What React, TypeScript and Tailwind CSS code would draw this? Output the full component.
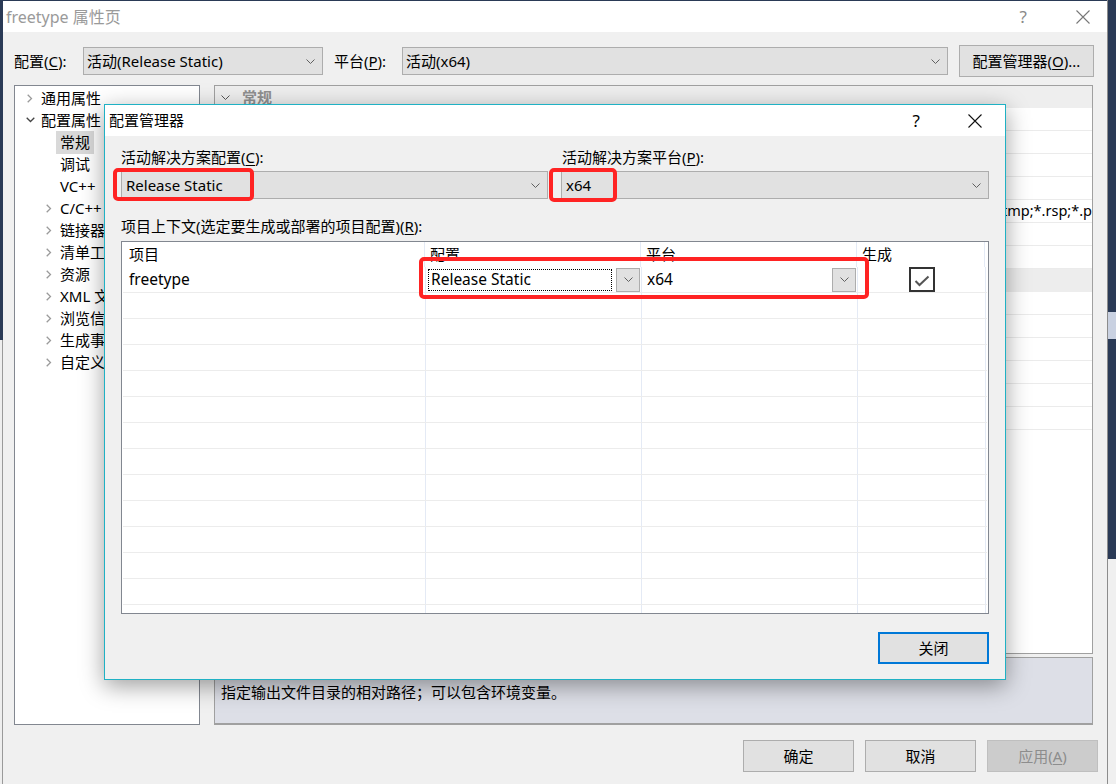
import React from "react";

const FONT = "font-['Noto_Sans','Noto_Sans_CJK_SC',sans-serif]";

function Chevron({ className = "" }: { className?: string }) {
  return (
    <svg width="9" height="5" viewBox="0 0 9 5" className={className}>
      <path d="M0.5 0.5L4.5 4.5L8.5 0.5" fill="none" stroke="currentColor" strokeWidth="1" />
    </svg>
  );
}

function TreeArrow({ open }: { open?: boolean }) {
  if (open)
    return (
      <svg width="9" height="6" viewBox="0 0 9 6">
        <path d="M0.7 0.7L4.5 4.5L8.3 0.7" fill="none" stroke="#444" strokeWidth="1.3" />
      </svg>
    );
  return (
    <svg width="6" height="9" viewBox="0 0 6 9">
      <path d="M0.7 0.7L4.5 4.5L0.7 8.3" fill="none" stroke="#9a9a9a" strokeWidth="1.3" />
    </svg>
  );
}

function CloseX({ color }: { color: string }) {
  return (
    <svg width="14" height="14" viewBox="0 0 14 14">
      <path d="M0.5 0.5L13.5 13.5M13.5 0.5L0.5 13.5" stroke={color} strokeWidth="1.1" fill="none" />
    </svg>
  );
}

function Combo({ text, className }: { text: string; className: string }) {
  return (
    <div className={`flex h-[28px] items-center justify-between border border-[#adadad] bg-[#e1e1e1] pl-[3px] pr-[7px] text-[15px] text-black ${className}`}>
      <span>{text}</span>
      <Chevron className="text-[#606060]" />
    </div>
  );
}

const tree: { label: string; level: number; arrow?: "open" | "closed"; selected?: boolean }[] = [
  { label: "通用属性", level: 1, arrow: "closed" },
  { label: "配置属性", level: 1, arrow: "open" },
  { label: "常规", level: 2, selected: true },
  { label: "调试", level: 2 },
  { label: "VC++\u00a0\u00a0目录", level: 2 },
  { label: "C/C++", level: 2, arrow: "closed" },
  { label: "链接器", level: 2, arrow: "closed" },
  { label: "清单工具", level: 2, arrow: "closed" },
  { label: "资源", level: 2, arrow: "closed" },
  { label: "XML 文档生成器", level: 2, arrow: "closed" },
  { label: "浏览信息", level: 2, arrow: "closed" },
  { label: "生成事件", level: 2, arrow: "closed" },
  { label: "自定义生成步骤", level: 2, arrow: "closed" },
];

const general: [string, string, boolean?][] = [
  ["输出目录", "$(SolutionDir)$(Platform)\\$(Configuration)\\"],
  ["中间目录", "$(Platform)\\$(Configuration)\\"],
  ["目标文件名", "$(ProjectName)"],
  ["目标文件扩展名", ".lib"],
  ["清除时要删除的扩展名", "*.cdf;*.cache;*.obj;*.obj.enc;*.ilk;*.ipdb;*.iobj;*.resources;*.tlb;*.tli;*.tlh;*.tmp;*.rsp;*.p", true],
  ["生成日志文件", "$(IntDir)$(MSBuildProjectName).log"],
  ["平台工具集", "Visual Studio 2017 (v141)"],
];

const defaults: [string, string][] = [
  ["配置类型", "静态库(.lib)"],
  ["Windows SDK 版本", "10.0.17763.0"],
  ["字符集", "使用 Unicode 字符集"],
  ["公共语言运行时支持", "无公共语言运行时支持"],
  [".NET 目标框架版本", ""],
  ["全程序优化", "无全程序优化"],
];

function PropRow({ name, value, right }: { name: string; value: string; right?: boolean }) {
  return (
    <div className="flex h-[23px] shrink-0 border-b border-[#ebebeb] text-[15px]">
      <div className="flex w-[340px] items-center border-r border-[#ebebeb] pl-[22px]">{name}</div>
      <div className={`flex min-w-0 flex-1 items-center overflow-hidden whitespace-nowrap px-[4px] ${right ? "justify-end pr-0 text-[14.5px]" : ""}`}>
        {value}
      </div>
    </div>
  );
}

function OuterDialog() {
  return (
    <div className="mt-[1px] flex h-[783px] w-[1104px] shrink-0 flex-col bg-[#f0f0f0]">
      {/* title bar */}
      <div className="flex h-[31px] shrink-0 items-center bg-white pl-[3px] text-[16px] text-[#9a9a9a]">
        <span>freetype 属性页</span>
        <span className="ml-auto mr-[49px] text-[17px] text-[#8a8a8a]">?</span>
        <span className="mr-[17px]">
          <CloseX color="#777" />
        </span>
      </div>

      {/* configuration row */}
      <div className="mt-[13px] flex h-[32px] shrink-0 items-center pl-[11px] text-[15px] text-black">
        <span className="w-[69px]">
          配置(<span className="underline underline-offset-2">C</span>):
        </span>
        <Combo text="活动(Release Static)" className="w-[240px]" />
        <span className="ml-[11px] w-[68px]">
          平台(<span className="underline underline-offset-2">P</span>):
        </span>
        <Combo text="活动(x64)" className="w-[546px]" />
        <div className="ml-[11px] flex h-[32px] w-[135px] items-center justify-center border border-[#adadad] bg-[#e1e1e1]">
          配置管理器(<span className="underline underline-offset-2">O</span>)...
        </div>
      </div>

      {/* main area */}
      <div className="mt-[8px] flex h-[640px] shrink-0 pl-[11px] text-[15px] text-black">
        <div className="flex w-[186px] flex-col border border-[#828790] bg-white pt-[1px]">
          {tree.map((t) => (
            <div key={t.label} className="flex h-[22px] shrink-0 items-center whitespace-nowrap">
              <div className={`flex w-[12px] justify-center ${t.level === 1 ? "ml-[9px]" : "ml-[28px]"}`}>
                {t.arrow ? <TreeArrow open={t.arrow === "open"} /> : null}
              </div>
              <span className={`ml-[1px] px-[4px] leading-[23px] ${t.selected ? "bg-[#d9d9d9]" : ""}`}>{t.label}</span>
            </div>
          ))}
        </div>

        <div className="ml-[14px] flex w-[879px] flex-col">
          <div className="flex h-[569px] flex-col overflow-hidden border border-[#a0a0a0] bg-white">
            <div className="flex h-[22px] shrink-0 items-center bg-[#eeeeee] pl-[6px] text-[#909090]">
              <Chevron className="text-[#555]" />
              <span className="ml-[12px] font-bold">常规</span>
            </div>
            {general.map(([n, v, r]) => (
              <PropRow key={n} name={n} value={v} right={r} />
            ))}
            <div className="flex h-[23px] shrink-0 items-center bg-[#ededed] pl-[6px] text-[#909090]">
              <Chevron className="text-[#555]" />
              <span className="ml-[12px] font-bold">项目默认值</span>
            </div>
            {defaults.map(([n, v]) => (
              <PropRow key={n} name={n} value={v} />
            ))}
          </div>
          <div className="mt-[3px] flex h-[68px] flex-col border border-b-2 border-[#a0a0a0] bg-[#dddfe7] pl-[6px] pt-[1px]">
            <span className="h-[20px] font-bold leading-[20px]">输出目录</span>
            <span className="mt-[3px] h-[20px] leading-[20px]">指定输出文件目录的相对路径；可以包含环境变量。</span>
          </div>
        </div>
      </div>

      {/* bottom buttons */}
      <div className="mt-[15px] flex shrink-0 justify-end gap-[11px] pr-[9px] text-[15px]">
        <div className="flex h-[32px] w-[111px] items-center justify-center border border-[#adadad] bg-[#e1e1e1] text-black">确定</div>
        <div className="flex h-[32px] w-[111px] items-center justify-center border border-[#adadad] bg-[#e1e1e1] text-black">取消</div>
        <div className="flex h-[32px] w-[111px] items-center justify-center border border-[#bfbfbf] bg-[#cccccc] text-[#8d8d8d]">
          应用(<span className="underline underline-offset-2">A</span>)
        </div>
      </div>
    </div>
  );
}

const cols = "grid grid-cols-[303px_216px_216px_128px_1fr]";

function GridCells({ children }: { children?: React.ReactNode[] }) {
  const cells = children ?? [null, null, null, null, null];
  return (
    <>
      {cells.map((c, i) => (
        <div key={i} className={`flex h-full items-center ${i < 4 ? "border-r border-[#e4eaf5]" : ""}`}>
          {c}
        </div>
      ))}
    </>
  );
}

function ConfigManager() {
  return (
    <div className="absolute left-[104px] top-[104px] flex h-[576px] w-[902px] flex-col border border-[#1fb1c4] bg-[#f0f0f0] text-[15px] text-black shadow-[0_6px_22px_rgba(0,0,0,0.38)]">
      <div className="flex h-[31px] shrink-0 items-center bg-white pl-[4px] text-[15px]">
        <span>配置管理器</span>
        <span className="ml-auto mr-[48px] text-[17px]">?</span>
        <span className="mr-[23px]">
          <CloseX color="#111" />
        </span>
      </div>

      <div className="flex flex-col px-[16px]">
        <div className="mt-[11px] flex gap-[13px]">
          <div className="flex w-[427px] flex-col">
            <span className="h-[20px] leading-[20px]">
              活动解决方案配置(<span className="underline underline-offset-2">C</span>):
            </span>
            <Combo text="Release Static" className="mt-[4px] h-[27px] w-full pl-[4px] text-[15.5px]" />
          </div>
          <div className="flex w-[428px] flex-col">
            <span className="ml-[1px] h-[20px] leading-[20px]">
              活动解决方案平台(<span className="underline underline-offset-2">P</span>):
            </span>
            <Combo text="x64" className="mt-[4px] h-[27px] w-full pl-[4px] text-[15.5px]" />
          </div>
        </div>

        <span className="mt-[17px] h-[20px] leading-[20px]">
          项目上下文(选定要生成或部署的项目配置)(<span className="underline underline-offset-2">R</span>):
        </span>

        <div className="mt-[5px] flex h-[373px] w-[868px] flex-col border border-[#828790] bg-white">
          <div className={`${cols} h-[25px] shrink-0`}>
            <GridCells>
              {[
                <span key="a" className="pl-[7px]">项目</span>,
                <span key="b" className="pl-[5px]">配置</span>,
                <span key="c" className="pl-[5px]">平台</span>,
                <span key="d" className="pl-[5px]">生成</span>,
                null,
              ]}
            </GridCells>
          </div>
          <div className={`${cols} mx-[1px] h-[26px] shrink-0 border-b border-[#ececec] text-[15.5px]`}>
            <GridCells>
              {[
                <span key="a" className="pl-[6px]">freetype</span>,
                <div key="b" className="flex w-full items-center pl-[2px] pr-[1px]">
                  <div className="flex h-[22px] flex-1 items-center border border-dotted border-black pl-[2px]">Release Static</div>
                  <div className="ml-[4px] flex h-[24px] w-[24px] items-center justify-center border border-[#adadad] bg-[#e1e1e1]">
                    <Chevron className="text-[#606060]" />
                  </div>
                </div>,
                <div key="c" className="flex w-full items-center pl-[5px] pr-[1px]">
                  <span className="flex-1">x64</span>
                  <div className="flex h-[24px] w-[24px] items-center justify-center border border-[#adadad] bg-[#e1e1e1]">
                    <Chevron className="text-[#606060]" />
                  </div>
                </div>,
                <div key="d" className="flex w-full justify-center">
                  <div className="flex h-[25px] w-[26px] items-center justify-center border-2 border-[#333] bg-white">
                    <svg width="18" height="14" viewBox="0 0 18 14">
                      <path d="M2.5 8L6.5 12L15.5 3.5" fill="none" stroke="#555" strokeWidth="2" />
                    </svg>
                  </div>
                </div>,
                null,
              ]}
            </GridCells>
          </div>
          {Array.from({ length: 12 }).map((_, i) => (
            <div key={i} className={`${cols} mx-[1px] h-[26px] shrink-0 border-b border-[#ececec]`}>
              <GridCells />
            </div>
          ))}
          <div className={`${cols} mx-[1px] flex-1`}>
            <GridCells />
          </div>
        </div>

        <div className="mt-[18px] flex justify-end">
          <div className="flex h-[32px] w-[111px] items-center justify-center border-2 border-[#0078d7] bg-[#e1e1e1]">关闭</div>
        </div>
      </div>
    </div>
  );
}

export default function App() {
  return (
    <div className={`relative flex h-[784px] w-[1116px] overflow-hidden bg-[#2a3a56] ${FONT}`}>
      <div className="flex w-[3px] shrink-0 flex-col">
        <div className="h-[340px] bg-[#2a3a56]" />
        <div className="flex-1 border-r border-[#9a9a9a] bg-[#eeeeee]" />
      </div>
      <OuterDialog />
      <div className="flex w-[9px] shrink-0 flex-col border-l border-[#8c8c8c]">
        <div className="h-[312px] bg-[#2a3a56]" />
        <div className="h-[27px] bg-[#c9d1e1]" />
        <div className="h-[220px] bg-[#2a3a56]" />
        <div className="flex-1 bg-[#f0f0f0]" />
      </div>

      <ConfigManager />

      {/* red annotation boxes */}
      <div className="absolute left-[113px] top-[168px] h-[33px] w-[141px] rounded-[5px] border-4 border-[#ff2323]" />
      <div className="absolute left-[549px] top-[168px] h-[34px] w-[68px] rounded-[5px] border-4 border-[#ff2323]" />
      <div className="absolute left-[419px] top-[257px] h-[42px] w-[450px] rounded-[5px] border-4 border-[#ff2323]" />
    </div>
  );
}
